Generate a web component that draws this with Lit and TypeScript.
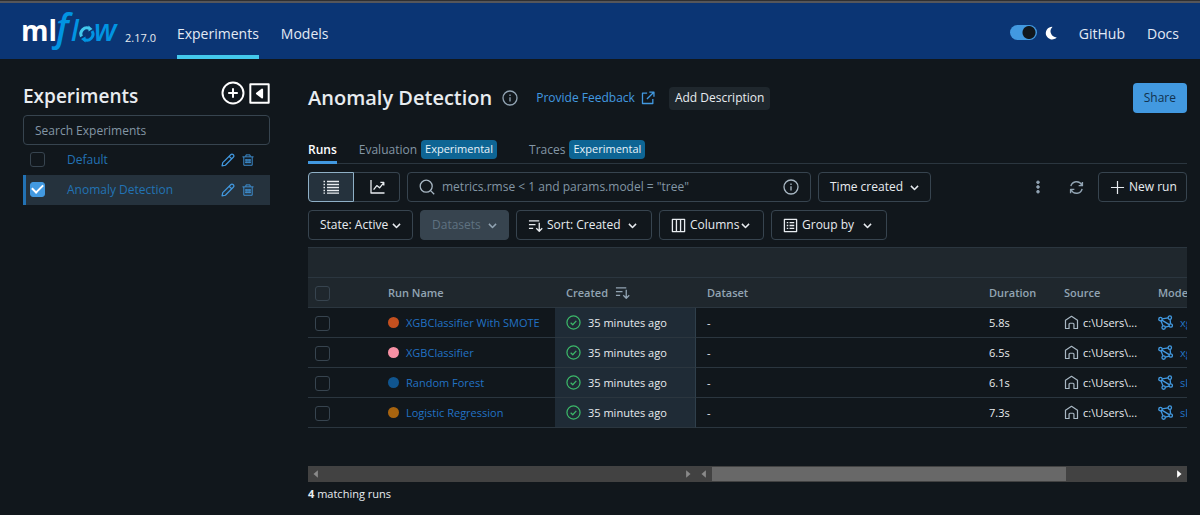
import { LitElement, html, css, svg, nothing } from "lit";
import { customElement, property, state } from "lit/decorators.js";
import { classMap } from "lit/directives/class-map.js";
import { styleMap } from "lit/directives/style-map.js";

const shapes: Record<string, unknown> = {
  info: svg`<circle cx="8" cy="8" r="7"/><path d="M8 7.2v4.3M8 4.6v1.4"/>`,
  external: svg`<path d="M7 2.5H1.7v11.8h11.8V9M9.5 1.2h5.3v5.3M14.6 1.4 6.8 9.2"/>`,
  chevron: svg`<path d="m3.6 6 4.4 4.4L12.4 6"/>`,
  search: svg`<circle cx="7.2" cy="7.2" r="6"/><path d="m11.6 11.6 3.6 3.6"/>`,
  list: svg`<path d="M4 2.5h12M4 5.5h12M4 8.5h12M4 11.5h12M4 14.2h12M.5 2.5H2M.5 5.5H2M.5 8.5H2M.5 11.5H2M.5 14.2H2"/>`,
  chart: svg`<path d="M2 1v13h13.5M4.6 10.6l3.2-4 2.8 2.2 4-5M11.4 3.4h3.4v3"/>`,
  sort: svg`<path d="M1 3h11M1 7h7M1 11h4.5M12 5v9M8.8 11l3.2 3.2 3.2-3.2"/>`,
  columns: svg`<path d="M1.5 1.5h13v13h-13zM5.8 1.5v13M10.2 1.5v13"/>`,
  group: svg`<path d="M1.5 1.5h13v13h-13zM4 5h1.6M4 8h1.6M4 11h1.6M7 5h5M7 8h5M7 11h5"/>`,
  refresh: svg`<path d="M2 6.6A6.2 6.2 0 0 1 13.6 5.4M14 9.4A6.2 6.2 0 0 1 2.4 10.6M14.3 2v4h-4M1.7 14v-4h4"/>`,
  plus: svg`<path d="M8 1v14M1 8h14"/>`,
  home: svg`<path d="M1.6 14.4V5.6L8 1.4l6.4 4.2v8.8H10.6V9.8a1 1 0 0 0-1-1H6.4a1 1 0 0 0-1 1v4.6z"/>`,
  model: svg`<path d="M4.4 4.1 10.9 3.1M3.2 6.1 5.3 11.6M4.1 5.5 12 10.3M12.9 4.6 13.4 9.4M7.8 12.9 11.9 11.8"/><circle cx="2.6" cy="4.4" r="1.8"/><circle cx="12.6" cy="2.8" r="1.8"/><circle cx="6" cy="13.4" r="1.8"/><circle cx="13.6" cy="11.2" r="1.8"/>`,
  check: svg`<circle cx="8" cy="8" r="7"/><path d="m5 8.3 2.2 2.1L11 6.2"/>`,
  pencil: svg`<path d="M1.2 14.8 2 11 11.4 1.7a1.6 1.6 0 0 1 2.3 0l.6.6a1.6 1.6 0 0 1 0 2.3L5 14zM9.4 3.8l2.8 2.8"/>`,
  trash: svg`<path d="M.6 3.8h14.8M5.2 3.6V1.2h5.6v2.4M2.4 4v11h11.2V4M5.5 6.5v6M8 6.5v6M10.5 6.5v6M4 8h8M4 11h8"/>`,
  addCircle: svg`<circle cx="8" cy="8" r="7"/><path d="M8 4.8v6.4M4.8 8h6.4"/>`,
  collapse: svg`<path d="M1 1h14v14H1z"/><path class="solid" d="M10 5v6L6 8z"/>`,
  kebab: svg`<circle class="solid" cx="8" cy="2.6" r="1.6"/><circle class="solid" cx="8" cy="8" r="1.6"/><circle class="solid" cx="8" cy="13.4" r="1.6"/>`,
  moon: svg`<path class="solid" d="M9.6 1A7.2 7.2 0 1 0 14.6 13 7 7 0 0 1 9.6 1z"/>`,
  left: svg`<path class="solid" d="M11 2v12L4 8z"/>`,
  right: svg`<path class="solid" d="M5 2v12l7-6z"/>`,
};

@customElement("ui-icon")
class UiIcon extends LitElement {
  @property() name = "";
  @property({ type: Number }) size = 14;
  @property({ type: Number }) weight = 1.3;

  static styles = css`
    :host { display: inline-flex; flex: none; }
    svg { display: block; fill: none; stroke: currentColor; }
    .solid { fill: currentColor; }
  `;

  render() {
    return html`<svg width=${this.size} height=${this.size} viewBox="0 0 16 16"
      stroke-width=${this.weight} stroke-linejoin="round" aria-hidden="true">${shapes[this.name]}</svg>`;
  }
}

const icon = (name: string, size = 14, weight = 1.3) =>
  html`<ui-icon .name=${name} .size=${size} .weight=${weight}></ui-icon>`;

interface Run {
  name: string;
  color: string;
  duration: string;
  model: string;
}

@customElement("app-root")
class AppRoot extends LitElement {
  @state() private selected = "Anomaly Detection";
  @state() private view = "table";

  private experiments = ["Default", "Anomaly Detection"];

  private runs: Run[] = [
    { name: "XGBClassifier With SMOTE", color: "#c4501f", duration: "5.8s", model: "xgboost" },
    { name: "XGBClassifier", color: "#f791a5", duration: "6.5s", model: "xgboost" },
    { name: "Random Forest", color: "#10558f", duration: "6.1s", model: "sklearn" },
    { name: "Logistic Regression", color: "#a8640f", duration: "7.3s", model: "sklearn" },
  ];

  static styles = css`
    :host {
      display: flex;
      flex-direction: column;
      min-height: 100vh;
      background: #11171c;
      color: #e8ecf0;
      font: 12px/16px "Open Sans", "Noto Sans", sans-serif;
    }
    * { box-sizing: border-box; }
    button, input { font: inherit; color: inherit; margin: 0; }
    button { cursor: pointer; }
    a { color: #2272c4; text-decoration: none; }

    .top {
      display: flex;
      align-items: stretch;
      height: 59px;
      padding: 0 21px;
      border-top: 1px solid #2f2f31;
      box-shadow: inset 0 2px #56565a;
      background: #0b3574;
    }
    .logo { display: flex; align-items: center; padding-top: 2px; }
    .logo svg { display: block; overflow: visible; }
    .version { font-size: 11px; align-self: flex-end; margin: 0 21px 13px 4px; }
    .nav { display: flex; gap: 22px; font-size: 14px; }
    .nav a { display: flex; align-items: center; color: #e3eaf4; padding: 12px 0 4px; }
    .nav a.current { border-bottom: 4px solid #43c9ed; padding-bottom: 0; }
    .theme { display: flex; align-items: center; gap: 7px; margin-right: 21px; padding-top: 5px; color: #fff; }
    .links { display: flex; margin-left: auto; }
    .switch {
      appearance: none;
      width: 27px;
      height: 15px;
      border-radius: 8px;
      background: radial-gradient(circle at 19px 50%, #11171c 6px, transparent 7px) #4299e0;
    }

    .body { display: flex; flex: 1; padding: 0 13px 0 23px; }
    .side { width: 247px; flex: none; margin-right: 38px; padding-top: 21px; }
    .side-head { display: flex; align-items: center; height: 32px; margin-bottom: 3px; gap: 4px; }
    h1 { margin: 0; font-size: 20px; line-height: 32px; font-weight: 600; }
    .side-head h1 { flex: 1; font-size: 19px; }
    .ghost { display: inline-flex; align-items: center; border: 0; padding: 0; background: none; }
    .side-head .ghost { color: #fff; margin-bottom: 6px; }
    .side-search {
      width: 100%;
      height: 30px;
      padding: 0 11px;
      border: 1px solid #37444f;
      border-radius: 4px;
      background: transparent;
    }
    input::placeholder { color: #8396a5; opacity: 1; }
    .exp {
      display: flex;
      align-items: center;
      height: 30px;
      padding: 0 16px 0 4px;
      border-left: 3px solid transparent;
    }
    .exp.on { background: #25323d; border-color: #2272b4; }
    .exp label { flex: 1; display: flex; align-items: center; gap: 22px; color: #2272b4; }
    .exp .box { margin-bottom: 2px; }
    .exp .ghost { color: #4299e0; }
    .exp .ghost + .ghost { margin-left: 7px; }

    .box {
      appearance: none;
      width: 15px;
      height: 15px;
      flex: none;
      border: 1px solid #37444f;
      border-radius: 3px;
      display: inline-grid;
      place-content: center;
      vertical-align: middle;
    }
    .box:checked { background: #4299e0; border-color: #4299e0; }
    .box:checked::after {
      content: "";
      width: 9px;
      height: 5px;
      margin-bottom: 3px;
      border: solid #fff;
      border-width: 0 0 2px 2px;
      rotate: -45deg;
    }

    .main { flex: 1; min-width: 0; padding-top: 23px; }
    .title { display: flex; align-items: center; height: 32px; }
    .title .ghost { margin-left: 10px; color: #92a4b3; }
    .feedback { display: flex; align-items: center; gap: 6px; margin: 0 14px 0 18px; color: #4299e0; }
    .desc { height: 23px; border: 0; border-radius: 4px; padding: 0 6px; background: #1f272d; }
    .share {
      margin-left: auto;
      height: 30px;
      padding: 0 11px;
      border: 0;
      border-radius: 4px;
      background: #4299e0;
      color: #11324f;
    }
    .tabs { display: flex; gap: 32px; margin-top: 24px; height: 26px; border-bottom: 1px solid #2b363f; }
    .tabs a { display: flex; align-items: center; gap: 4px; height: 26px; padding-bottom: 3px; color: #8396a5; }
    .tabs a.current { color: #fff; font-weight: 600; border-bottom: 3px solid #4299e0; padding-bottom: 0; margin-right: -10px; }
    .tag { padding: 1px 4px 2px; border-radius: 4px; background: #0e6594; color: #e8f3fa; font-size: 11px; }

    .bar { display: flex; align-items: center; gap: 7px; margin-top: 8px; }
    .btn {
      display: inline-flex;
      align-items: center;
      justify-content: space-between;
      height: 30px;
      padding: 0 9px 0 11px;
      border: 1px solid #37444f;
      border-radius: 4px;
      background: transparent;
      white-space: nowrap;
    }
    .btn:disabled { background: #37444f; color: #5f7281; }
    .btn:disabled ui-icon { color: #92a4b3; }
    .state { width: 105px; }
    .data { width: 89px; }
    .sort, .cols, .group { padding-right: 12px; }
    .sort { width: 136px; }
    .cols { width: 105px; }
    .group { width: 116px; }
    .time { width: 113px; }
    .new { width: 89px; }
    .lead { display: inline-flex; align-items: center; gap: 4px; }
    .seg { display: flex; }
    .seg button {
      width: 46px;
      height: 30px;
      display: grid;
      place-content: center;
      border: 1px solid #37444f;
      background: transparent;
      padding: 0;
    }
    .seg button:first-child { border-radius: 4px 0 0 4px; }
    .seg button:last-child { border-radius: 0 4px 4px 0; border-left: 0; }
    .seg button.on { background: #25323d; border: 1px solid #8fb0c6; }
    .filter {
      display: flex;
      align-items: center;
      gap: 7px;
      width: 404px;
      height: 30px;
      padding: 0 11px;
      border: 1px solid #37444f;
      border-radius: 4px;
      color: #a9b8c4;
    }
    .filter input { flex: 1; min-width: 0; border: 0; padding: 0; background: none; outline: none; }
    .tools { display: flex; align-items: center; gap: 24px; margin: 0 7px 0 auto; color: #92a4b3; }

    .grid { margin-top: 7px; border-top: 1px solid #2b363f; }
    table { width: 100%; table-layout: fixed; border-collapse: separate; border-spacing: 0; }
    th, td {
      height: 30px;
      padding: 0 11px;
      border-bottom: 1px solid #2b363f;
      text-align: left;
      font-weight: 400;
      font-size: 11px;
      white-space: nowrap;
      overflow: hidden;
    }
    thead { background: #1f272d; }
    th { color: #92a4b3; font-weight: 600; }
    .c-check { width: 69px; }
    .c-name { width: 178px; }
    .c-created { width: 141px; }
    .c-duration { width: 75px; }
    .c-source { width: 94px; }
    .c-model { width: 40px; }
    .check { padding-left: 7px; }
    td.created { background: #1f2b36; border-right: 1px solid #2f3f4b; }
    .cell { display: flex; align-items: center; gap: 7px; }
    .dot { width: 11px; height: 11px; flex: none; border-radius: 50%; }
    .ok { color: #3cb869; }
    .home { color: #a9b8c4; }
    .net { color: #4299e0; }
    .source { gap: 4px; }
    .model { padding-right: 0; }

    .scroll { display: flex; height: 16px; margin-top: 38px; color: #8a8a8a; background: #424242; }
    .pane { display: flex; align-items: center; justify-content: space-between; width: 388px; padding: 0 3px; }
    .pane.wide { flex: 1; }
    .thumb { height: 14px; margin: 0 auto 0 3px; background: #686868; }
    .end { display: flex; color: #fff; }
    .count { margin: 4px 0 0; font-size: 11px; }
  `;

  private logo() {
    return html`<svg width="100" height="40" viewBox="0 0 100 40" role="img" aria-label="mlflow">
      <g font-family="Open Sans, Noto Sans, sans-serif">
        <text x="0" y="30" font-size="28" font-weight="700" fill="#fff">ml</text>
        <g fill="#0194e2" font-style="italic">
          <text x="35" y="30" font-size="37" font-weight="600">f</text>
          <text x="50" y="30" font-size="28" font-weight="600">l</text>
          <text x="73" y="30" font-size="30" font-weight="600">w</text>
        </g>
      </g>
      <g fill="none" stroke-width="3">
        <path stroke="#43c9ed" d="M60.5 25.5a6 6 0 0 1 8-8"/>
        <path stroke="#0194e2" d="M71 20a6 6 0 0 1-8 8.4"/>
      </g>
      <path fill="#43c9ed" d="M67.5 14.5v6l4-2.5z"/>
      <path fill="#0194e2" d="M64.5 31.5v-6l-4.5 2.5z"/>
    </svg>`;
  }

  render() {
    return html`
      <header class="top">
        <a class="logo" href="#">${this.logo()}</a>
        <span class="version">2.17.0</span>
        <nav class="nav">
          <a class="current" href="#experiments">Experiments</a>
          <a href="#models">Models</a>
        </nav>
        <div class="links">
          <div class="theme">
            <input class="switch" type="checkbox" role="switch" aria-label="Dark theme" checked />
            ${icon("moon", 14, 0)}
          </div>
          <nav class="nav">
            <a href="#github">GitHub</a>
            <a href="#docs">Docs</a>
          </nav>
        </div>
      </header>
      <div class="body">
        <aside class="side">
          <div class="side-head">
            <h1>Experiments</h1>
            <button class="ghost" aria-label="New experiment">${icon("addCircle", 24, 1.3)}</button>
            <button class="ghost" aria-label="Collapse">${icon("collapse", 21, 1.5)}</button>
          </div>
          <input class="side-search" type="text" aria-label="Search Experiments" placeholder="Search Experiments" />
          ${this.experiments.map((name) => this.experiment(name))}
        </aside>
        <main class="main">
          <div class="title">
            <h1>Anomaly Detection</h1>
            <button class="ghost" aria-label="Details">${icon("info", 16)}</button>
            <a class="feedback" href="#feedback">Provide Feedback ${icon("external", 14, 1.5)}</a>
            <button class="desc">Add Description</button>
            <button class="share">Share</button>
          </div>
          <nav class="tabs">
            <a class="current" href="#runs">Runs</a>
            <a href="#evaluation">Evaluation <span class="tag">Experimental</span></a>
            <a href="#traces">Traces <span class="tag">Experimental</span></a>
          </nav>
          ${this.toolbar()} ${this.table()}
          <div class="scroll">
            <div class="pane">${icon("left", 10, 0)}${icon("right", 10, 0)}</div>
            <div class="pane wide">
              ${icon("left", 10, 0)}
              <div class="thumb" style=${styleMap({ width: "73%" })}></div>
              <span class="end">${icon("right", 10, 0)}</span>
            </div>
          </div>
          <p class="count"><b>4</b> matching runs</p>
        </main>
      </div>
    `;
  }

  private experiment(name: string) {
    const on = name === this.selected;
    return html`<div class=${classMap({ exp: true, on })}>
      <label>
        <input class="box" type="checkbox" .checked=${on} @change=${() => (this.selected = name)} />${name}
      </label>
      <button class="ghost" aria-label="Rename ${name}">${icon("pencil", 14, 1.4)}</button>
      <button class="ghost" aria-label="Delete ${name}">${icon("trash", 12, 1.2)}</button>
    </div>`;
  }

  private viewButton(id: string, label: string, name: string, size: number) {
    return html`<button class=${classMap({ on: this.view === id })} aria-label=${label}
      @click=${() => (this.view = id)}>${icon(name, size, 1.3)}</button>`;
  }

  private drop(cls: string, label: string, lead = "", disabled = false) {
    return html`<button class="btn ${cls}" ?disabled=${disabled}>
      <span class="lead">${lead ? icon(lead, 15, 1.4) : nothing}${label}</span>
      ${icon("chevron", 13, 1.8)}
    </button>`;
  }

  private toolbar() {
    return html`
      <div class="bar">
        <div class="seg">
          ${this.viewButton("table", "Table view", "list", 16)}
          ${this.viewButton("chart", "Chart view", "chart", 16)}
        </div>
        <div class="filter">
          ${icon("search", 16)}
          <input type="text" aria-label="Filter runs" placeholder='metrics.rmse < 1 and params.model = "tree"' />
          ${icon("info", 16)}
        </div>
        ${this.drop("time", "Time created")}
        <div class="tools">
          <button class="ghost" aria-label="More">${icon("kebab", 14, 0.8)}</button>
          <button class="ghost" aria-label="Refresh">${icon("refresh", 15, 1.5)}</button>
        </div>
        <button class="btn new"><span class="lead">${icon("plus", 15)}New run</span></button>
      </div>
      <div class="bar">
        ${this.drop("state", "State: Active")} ${this.drop("data", "Datasets", "", true)}
        ${this.drop("sort", "Sort: Created", "sort")} ${this.drop("cols", "Columns", "columns")}
        ${this.drop("group", "Group by", "group")}
      </div>
    `;
  }

  private table() {
    return html`<div class="grid">
      <table>
        <colgroup>
          <col class="c-check" /><col class="c-name" /><col class="c-created" /><col />
          <col class="c-duration" /><col class="c-source" /><col class="c-model" />
        </colgroup>
        <thead>
          <tr><td colspan="7"></td></tr>
          <tr>
            <th class="check"><input class="box" type="checkbox" aria-label="Select all runs" /></th>
            <th>Run Name</th>
            <th><span class="cell">Created ${icon("sort", 15, 1.4)}</span></th>
            <th>Dataset</th>
            <th>Duration</th>
            <th>Source</th>
            <th class="model">Models</th>
          </tr>
        </thead>
        <tbody>
          ${this.runs.map(
            (run) => html`<tr>
              <td class="check"><input class="box" type="checkbox" aria-label="Select ${run.name}" /></td>
              <td>
                <span class="cell">
                  <span class="dot" style=${styleMap({ background: run.color })}></span>
                  <a href="#run">${run.name}</a>
                </span>
              </td>
              <td class="created">
                <span class="cell"><span class="cell ok">${icon("check", 15)}</span>35 minutes ago</span>
              </td>
              <td>-</td>
              <td>${run.duration}</td>
              <td><span class="cell source"><span class="cell home">${icon("home", 15)}</span>c:\\Users\\...</span></td>
              <td class="model">
                <span class="cell"><span class="cell net">${icon("model", 15, 1.4)}</span><a href="#model">${run.model}</a></span>
              </td>
            </tr>`
          )}
        </tbody>
      </table>
    </div>`;
  }
}
